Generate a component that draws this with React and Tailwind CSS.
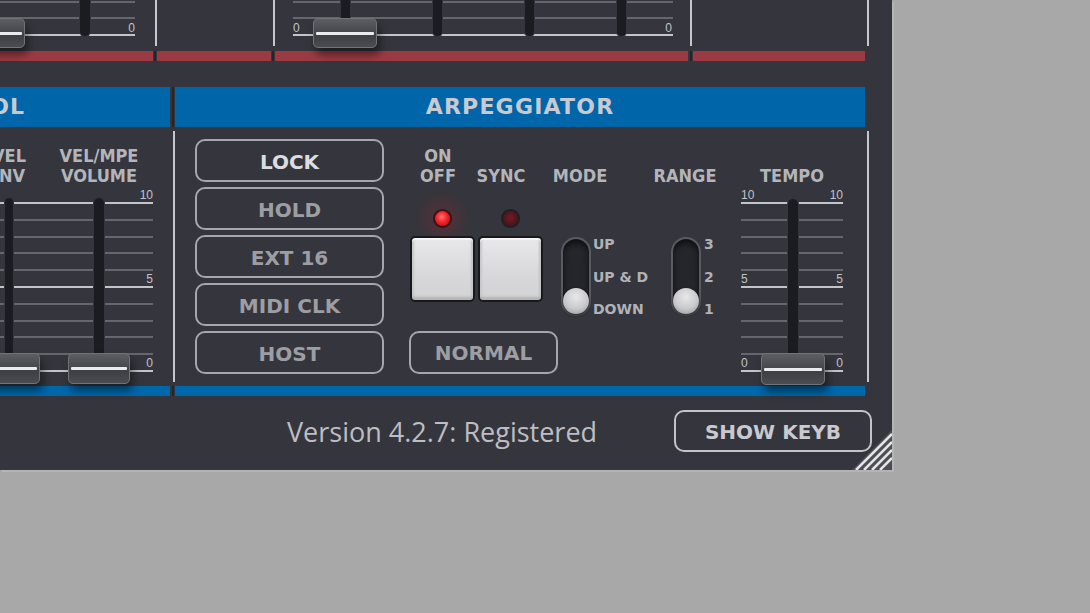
import React from "react";

const LABEL =
  "font-['DejaVu_Sans_Condensed','DejaVu_Sans',sans-serif] font-stretch-condensed font-bold text-[18px] leading-[20px] text-[#b4b5ba] whitespace-nowrap";
const BOLD = "font-['DejaVu_Sans',sans-serif] font-bold";
const DIGIT =
  "absolute font-['Liberation_Sans',sans-serif] text-[12px] leading-none text-[#c2c3c7]";

function VLine() {
  return <div className="w-[2px] shrink-0 bg-[#c6c7cb]" />;
}

function ScaleLines() {
  const rows = [1, 0, 0, 0, 0, 1, 0, 0, 0, 0, 1];
  return (
    <div className="h-[170px] flex flex-col justify-between">
      {rows.map((b, i) => (
        <div
          key={i}
          className={b ? "h-[2px] bg-[#c3c4c8]" : "h-[2px] bg-[#66676e]"}
        />
      ))}
    </div>
  );
}

function TopLines() {
  return (
    <div className="flex flex-col">
      <div className="h-[2px] bg-[#66676e]" />
      <div className="h-[2px] mt-[14px] bg-[#66676e]" />
      <div className="h-[2px] mt-[15px] bg-[#c3c4c8]" />
    </div>
  );
}

function Cap({ pos }) {
  return (
    <div
      className={`absolute ${pos} rounded-[5px] border border-[#727378] bg-[linear-gradient(to_bottom,#5d5e63,#4a4b50_40%,#45464b_50%,#3f4045_60%,#4b4c51)] shadow-[3px_7px_9px_rgba(0,0,0,0.45)] flex items-center px-[2px]`}
    >
      <div className="h-[3px] w-full rounded-[1px] bg-[#ebebed]" />
    </div>
  );
}

function OptButton({ children, bright, className }) {
  return (
    <div
      className={`${className} rounded-[10px] border-2 border-[#a6a7ab] flex items-center justify-center ${BOLD} text-[20px] leading-none ${
        bright ? "text-[#dcdde0]" : "text-[#9d9ea3]"
      }`}
    >
      {children}
    </div>
  );
}

function Square() {
  return (
    <div className="w-[65px] h-[66px] rounded-[5px] border-2 border-[#17181c] bg-[linear-gradient(to_bottom,#e8e8ea,#d8d8da_60%,#d2d2d4)] shadow-[inset_0_2px_1px_#f5f5f6,inset_0_-3px_2px_#b5b5b8,inset_2px_0_2px_#c9c9cb,inset_-2px_0_2px_#c2c2c4]" />
  );
}

function Switch({ labels, gap }) {
  return (
    <div className="flex">
      <div className="w-[30px] h-[79px] rounded-full border-2 border-[#5a5b62] bg-[#25262c] shadow-[inset_0_4px_6px_rgba(0,0,0,0.6)] flex flex-col justify-end">
        <div className="w-[26px] h-[26px] rounded-full bg-[radial-gradient(circle_at_50%_35%,#e8e8ea,#c9c9cc_55%,#8e8f93)] shadow-[0_1px_3px_rgba(0,0,0,0.7)]" />
      </div>
      <div
        className={`${gap} h-[79px] flex flex-col justify-between ${BOLD} text-[14px] leading-[14px] text-[#b1b2b7] whitespace-nowrap`}
      >
        {labels.map((l) => (
          <span key={l}>{l}</span>
        ))}
      </div>
    </div>
  );
}

function TopRow() {
  return (
    <div className="flex h-[46px] shrink-0">
      <div className="relative w-[155px] pt-[1px]">
        <div className="w-[135px]">
          <TopLines />
        </div>
        <div className="absolute left-[80px] top-[-10px] w-[10px] h-[46px] rounded-b-full bg-[#1b1c21] shadow-[0_0_0_1px_#35363d]" />
        <span className={`${DIGIT} right-[20px] top-[22px]`}>0</span>
        <Cap pos="left-[-39px] top-[18px] w-[64px] h-[30px]" />
      </div>
      <VLine />
      <div className="w-[116px]" />
      <VLine />
      <div className="relative w-[415px] pt-[1px] pl-[18px]">
        <div className="w-[380px]">
          <TopLines />
        </div>
        <div className="absolute left-[66px] top-[-10px] w-[9px] h-[46px] rounded-b-full bg-[#1b1c21] shadow-[0_0_0_1px_#35363d]" />
        <div className="absolute left-[158px] top-[-10px] w-[9px] h-[46px] rounded-b-full bg-[#1b1c21] shadow-[0_0_0_1px_#35363d]" />
        <div className="absolute left-[250px] top-[-10px] w-[9px] h-[46px] rounded-b-full bg-[#1b1c21] shadow-[0_0_0_1px_#35363d]" />
        <div className="absolute left-[342px] top-[-10px] w-[9px] h-[46px] rounded-b-full bg-[#1b1c21] shadow-[0_0_0_1px_#35363d]" />
        <span className={`${DIGIT} left-[18px] top-[22px]`}>0</span>
        <span className={`${DIGIT} right-[18px] top-[22px]`}>0</span>
        <Cap pos="left-[38px] top-[18px] w-[64px] h-[30px]" />
      </div>
      <VLine />
      <div className="w-[175px]" />
      <VLine />
    </div>
  );
}

function Gap({ w }) {
  return (
    <div className={`${w} flex justify-center`}>
      <div className="w-[2px] bg-[#24252a]" />
    </div>
  );
}

function RedRow() {
  return (
    <div className="flex h-[10px] mt-[5px] shrink-0">
      <div className="w-[153px] bg-[#9c3a43]" />
      <Gap w="w-[4px]" />
      <div className="w-[114px] bg-[#9c3a43]" />
      <Gap w="w-[4px]" />
      <div className="w-[413px] bg-[#9c3a43]" />
      <Gap w="w-[5px]" />
      <div className="w-[172px] bg-[#9c3a43]" />
    </div>
  );
}

function HeaderRow() {
  const T = `${BOLD} text-[22px] leading-none tracking-[1.2px] text-[#c9cacf] whitespace-nowrap`;
  return (
    <div className="flex h-[40px] shrink-0">
      <div className="w-[170px] bg-[#0066a9] flex items-center overflow-hidden">
        <span className={`${T} ml-[-101px] shrink-0`}>CONTROL</span>
      </div>
      <Gap w="w-[5px]" />
      <div className="w-[690px] bg-[#0066a9] flex items-center justify-center">
        <span className={T}>ARPEGGIATOR</span>
      </div>
    </div>
  );
}

function LeftSection() {
  return (
    <div className="w-[173px] flex flex-col">
      <div className="flex mt-[19px] h-[40px] items-end">
        <div className={`${LABEL} w-[40px] ml-[-11px] flex flex-col items-center`}>
          <span>VEL</span>
          <span>INV</span>
        </div>
        <div className={`${LABEL} w-[100px] ml-[20px] flex flex-col items-center`}>
          <span>VEL/MPE</span>
          <span>VOLUME</span>
        </div>
      </div>
      <div className="relative mt-[16px] w-[153px] h-[170px]">
        <ScaleLines />
        <div className="absolute left-[5px] top-[-4px] w-[8px] h-[172px] rounded-full bg-[#1b1c21] shadow-[0_0_0_1px_#35363d]" />
        <div className="absolute left-[94px] top-[-4px] w-[10px] h-[172px] rounded-full bg-[#1b1c21] shadow-[0_0_0_1px_#35363d]" />
        <span className={`${DIGIT} right-0 top-[-13px]`}>10</span>
        <span className={`${DIGIT} right-0 top-[71px]`}>5</span>
        <span className={`${DIGIT} right-0 top-[155px]`}>0</span>
        <Cap pos="left-[-22px] top-[151px] w-[62px] h-[31px]" />
        <Cap pos="left-[68px] top-[151px] w-[62px] h-[31px]" />
      </div>
    </div>
  );
}

function RightSection() {
  return (
    <div className="w-[692px] flex items-start">
      <div className="ml-[20px] mt-[12px] w-[189px] flex flex-col gap-[5px]">
        <OptButton bright className="h-[43px] pt-[3px]">LOCK</OptButton>
        <OptButton className="h-[43px] pt-[3px]">HOLD</OptButton>
        <OptButton className="h-[43px] pt-[3px]">EXT 16</OptButton>
        <OptButton className="h-[43px] pt-[3px]">MIDI CLK</OptButton>
        <OptButton className="h-[43px] pt-[3px]">HOST</OptButton>
      </div>

      <div className="ml-[25px] w-[149px] flex flex-col">
        <div className="flex">
          <div className="ml-[1px] w-[65px] flex flex-col items-center">
            <div className={`${LABEL} mt-[19px] h-[40px] pr-[9px] flex flex-col items-center`}>
              <span>ON</span>
              <span>OFF</span>
            </div>
            <div className="mt-[23px] w-[19px] h-[19px] rounded-full border-2 border-[#3a1317] bg-[radial-gradient(circle_at_45%_40%,#ff7070_0%,#f02328_45%,#b8101b_85%)] shadow-[0_0_16px_9px_rgba(200,30,40,0.2)]" />
            <div className="mt-[8px]">
              <Square />
            </div>
          </div>
          <div className="ml-[3px] w-[65px] flex flex-col items-center">
            <div className={`${LABEL} mt-[19px] h-[40px] pr-[19px] flex items-end`}>
              SYNC
            </div>
            <div className="mt-[23px] w-[19px] h-[19px] rounded-full border-2 border-[#1f2024] bg-[radial-gradient(circle_at_50%_45%,#6e1d27,#4c121a_75%)]" />
            <div className="mt-[8px]">
              <Square />
            </div>
          </div>
        </div>
        <OptButton className="mt-[29px] h-[43px] w-[149px] pt-[1px]">NORMAL</OptButton>
      </div>

      <div className="w-[92px] flex flex-col">
        <div className={`${LABEL} mt-[19px] h-[40px] w-[44px] flex items-end justify-center`}>
          MODE
        </div>
        <div className="mt-[51px] ml-[3px]">
          <Switch labels={["UP", "UP & D", "DOWN"]} gap="ml-[2px]" />
        </div>
      </div>

      <div className="w-[70px] flex flex-col">
        <div className={`${LABEL} mt-[19px] h-[40px] w-[70px] flex items-end justify-center`}>
          RANGE
        </div>
        <div className="mt-[51px] ml-[21px]">
          <Switch labels={["3", "2", "1"]} gap="ml-[3px]" />
        </div>
      </div>

      <div className="ml-[21px] w-[102px] flex flex-col">
        <div className={`${LABEL} mt-[19px] h-[40px] w-[102px] flex items-end justify-center`}>
          TEMPO
        </div>
        <div className="relative mt-[16px] w-[102px] h-[170px]">
          <ScaleLines />
          <div className="absolute left-[47px] top-[-3px] w-[10px] h-[172px] rounded-full bg-[#1b1c21] shadow-[0_0_0_1px_#35363d]" />
          <span className={`${DIGIT} left-0 top-[-13px]`}>10</span>
          <span className={`${DIGIT} right-0 top-[-13px]`}>10</span>
          <span className={`${DIGIT} left-0 top-[71px]`}>5</span>
          <span className={`${DIGIT} right-0 top-[71px]`}>5</span>
          <span className={`${DIGIT} left-0 top-[155px]`}>0</span>
          <span className={`${DIGIT} right-0 top-[155px]`}>0</span>
          <Cap pos="left-[20px] top-[151px] w-[64px] h-[32px]" />
        </div>
      </div>
    </div>
  );
}

function MainRow() {
  return (
    <div className="flex h-[259px] shrink-0">
      <LeftSection />
      <div className="w-[2px] my-[4px] bg-[#c6c7cb]" />
      <RightSection />
      <div className="w-[2px] my-[4px] bg-[#c6c7cb]" />
    </div>
  );
}

function BlueRow() {
  return (
    <div className="flex h-[10px] shrink-0">
      <div className="w-[170px] bg-[#0067aa]" />
      <Gap w="w-[5px]" />
      <div className="w-[690px] bg-[#0067aa]" />
    </div>
  );
}

function Footer() {
  return (
    <div className="flex items-start h-[74px] shrink-0">
      <span className="ml-[287px] mt-[22px] font-['Open_Sans',sans-serif] text-[27px] leading-none text-[#bdbec3] whitespace-nowrap">
        Version 4.2.7: Registered
      </span>
      <div
        className={`ml-auto mr-[20px] mt-[14px] w-[198px] h-[42px] pt-[2px] rounded-[10px] border-2 border-[#c3c4c8] flex items-center justify-center ${BOLD} text-[20px] leading-none text-[#c9cacf]`}
      >
        SHOW KEYB
      </div>
    </div>
  );
}

function Grip() {
  return (
    <svg
      className="absolute right-0 bottom-0"
      width="40"
      height="40"
      viewBox="0 0 40 40"
    >
      <polygon points="0,40 40,0 40,40" fill="#4d4e54" />
      <line x1="4" y1="40" x2="40" y2="4" stroke="#e6e6e8" strokeWidth="2.5" />
      <line x1="12" y1="40" x2="40" y2="12" stroke="#e6e6e8" strokeWidth="2.5" />
      <line x1="20" y1="40" x2="40" y2="20" stroke="#e6e6e8" strokeWidth="2.5" />
      <line x1="28" y1="40" x2="40" y2="28" stroke="#e6e6e8" strokeWidth="2.5" />
    </svg>
  );
}

export default function App() {
  return (
    <div className="w-[1090px] h-[613px] bg-[#a8a8a8] overflow-hidden">
      <div className="relative w-[892px] h-[470px] bg-[#35363d] flex flex-col overflow-hidden shadow-[2px_2px_0_#b4b4b4]">
        <TopRow />
        <RedRow />
        <div className="h-[26px] shrink-0" />
        <HeaderRow />
        <MainRow />
        <BlueRow />
        <Footer />
        <Grip />
      </div>
    </div>
  );
}
